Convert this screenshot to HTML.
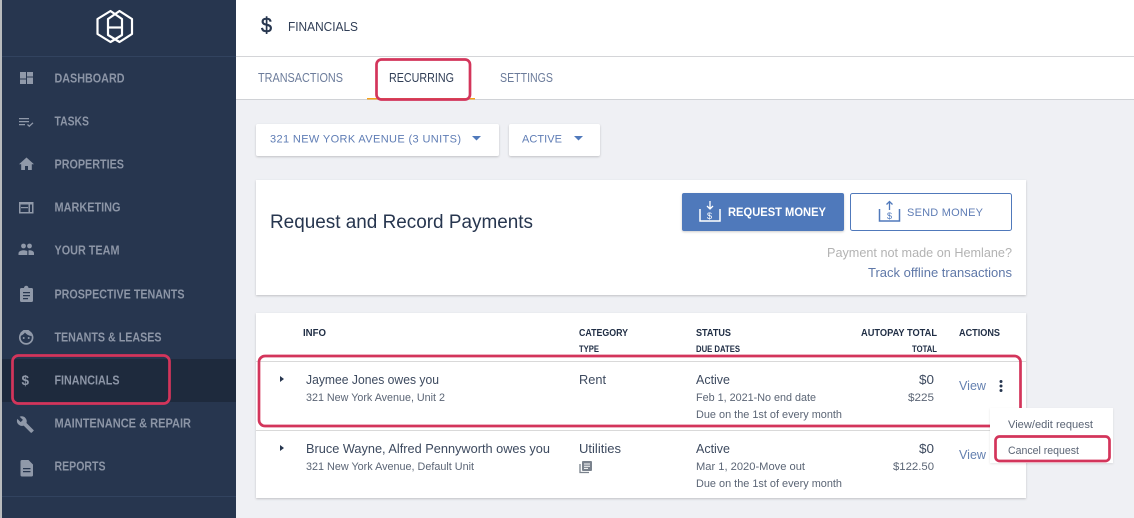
<!DOCTYPE html>
<html><head><meta charset="utf-8"><title>Financials</title>
<style>
html,body{margin:0;padding:0;background:#eff0f4}
svg{display:block}
text{font-family:"Liberation Sans",sans-serif}
.nav{font-size:12.5px;font-weight:bold;fill:#8c95a6}
.ni{fill:#9099a9}
.t{font-size:12.5px;fill:#3d4a5f}
.s{font-size:11px;fill:#5b6575}
.h{font-size:10.5px;font-weight:bold;fill:#1f2d44}
.h2{font-size:9.5px;font-weight:bold;fill:#1f2d44}
.b{fill:#5079bb}
</style></head><body>
<svg width="1134" height="518" viewBox="0 0 1134 518" xmlns="http://www.w3.org/2000/svg">
<defs>
<filter id="sh" x="-5%" y="-20%" width="110%" height="140%"><feDropShadow dx="0" dy="1" stdDeviation="1" flood-color="#000" flood-opacity=".2"/></filter>
<filter id="sh2" x="-10%" y="-20%" width="120%" height="140%"><feDropShadow dx="0" dy="1" stdDeviation="1" flood-color="#000" flood-opacity=".1"/></filter>
</defs>
<rect width="1134" height="518" fill="#eff0f4"/>
<!-- header -->
<rect x="236" y="0" width="898" height="56" fill="#fff"/>
<rect x="236" y="56" width="898" height="1" fill="#d4d5d8"/>
<rect x="236" y="57" width="898" height="42" fill="#fff"/>
<rect x="236" y="99" width="898" height="1" fill="#d0d2d6"/>
<text x="261" y="32.500" font-size="21" stroke="#27364f" stroke-width=".5" fill="#27364f" textLength="11" lengthAdjust="spacingAndGlyphs">$</text>
<text x="288" y="31" font-size="12.5" fill="#2f3d55" textLength="70" lengthAdjust="spacingAndGlyphs">FINANCIALS</text>
<text x="258" y="82" font-size="13" fill="#6c7c9b" textLength="85" lengthAdjust="spacingAndGlyphs">TRANSACTIONS</text>
<text x="389" y="82" font-size="13" fill="#2f3d55" textLength="65" lengthAdjust="spacingAndGlyphs">RECURRING</text>
<text x="500" y="82" font-size="13" fill="#6c7c9b" textLength="53" lengthAdjust="spacingAndGlyphs">SETTINGS</text>
<rect x="367" y="98" width="108" height="1.500" fill="#f5a11c"/>
<rect x="376.500" y="59.500" width="93.500" height="40" rx="5" fill="none" stroke="#d3355b" stroke-width="2.700"/>

<!-- sidebar -->
<rect x="0" y="0" width="2" height="518" fill="#b9bbbd"/>
<rect x="2" y="0" width="234" height="518" fill="#27364f"/>
<rect x="2" y="56" width="234" height="1" fill="#32435f"/>
<rect x="2" y="496" width="234" height="1" fill="#32435f"/>
<rect x="2" y="359" width="234" height="43" fill="#1e2a3d"/>
<g fill="none" stroke="#fff" stroke-width="2.200" stroke-linejoin="round">
<path d="M110.500 11 L97.500 19 V34 L110.500 42 L122 35 V19 Z"/>
<path d="M119.500 11 L132 19 V34 L119.500 42 L108 35 V19 Z"/>
<path d="M108 27.500 H122"/>
</g>
<rect x="20" y="72" width="6" height="6.500" class="ni"/><rect x="20" y="79.500" width="6" height="4.500" class="ni"/><rect x="27" y="72" width="6" height="4.500" class="ni"/><rect x="27" y="77.500" width="6" height="6.500" class="ni"/>
<path d="M19 118h10v1.200H19zM19 121h10v1.200H19zM19 124h6v1.200H19z" class="ni"/><path d="M27.500 124.500l1.800 1.700 3.700-3.400" fill="none" stroke="#9099a9" stroke-width="1.300"/>
<path d="M26.500 157.500l-7.500 6.700h2.200v5.800h3.800v-4h3v4h3.800v-5.800h2.200z" class="ni"/>
<path fill-rule="evenodd" d="M19 202h14.500v11.500H19zM20.500 204.500v7.500h8v-7.500zM30 204.500v7.500h2v-7.500z" class="ni"/><rect x="21" y="207" width="7" height="1.200" class="ni"/>
<circle cx="23.500" cy="246" r="2.400" class="ni"/><circle cx="29.500" cy="246" r="2.400" class="ni"/><path d="M18.500 255v-1.800c0-2 3-3 5-3s3.800.7 3.800.7v4.100zM28.500 255v-4.600c2-.5 5.500.5 5.500 2.800v1.800z" class="ni"/>
<path fill-rule="evenodd" d="M21.500 288h2.500a2.200 2.200 0 0 1 4.500 0h3a1.500 1.500 0 0 1 1.500 1.500v11a1.500 1.500 0 0 1-1.500 1.500h-10a1.500 1.500 0 0 1-1.500-1.500v-11a1.500 1.500 0 0 1 1.500-1.500zM23 292v1.300h7V292zM23 295v1.300h7V295zM23 298v1.300h5V298z" class="ni"/>
<circle cx="26.200" cy="337.500" r="6.400" fill="none" stroke="#9099a9" stroke-width="1.700"/><path d="M20 336c2-.5 4-2 5-3.500 1.500 2 4 3.500 7 3.500l-.5-3.500-3-2.500h-5l-3 2.500z" class="ni"/><circle cx="23.700" cy="338" r="1" class="ni"/><circle cx="28.700" cy="338" r="1" class="ni"/>
<text x="21.500" y="385" font-size="13.500" font-weight="bold" fill="#9099a9">$</text>
<path d="M33.500 430l-7-7c.6-1.800.2-3.800-1.300-5.300-1.500-1.500-3.700-1.800-5.500-1l3.200 3.200-2.200 2.200-3.300-3.200c-.9 1.800-.5 4 1 5.500 1.500 1.500 3.500 1.900 5.300 1.200l7 7c.3.300.8.300 1.100 0l1.700-1.700c.4-.3.4-.6 0-.9z" class="ni"/>
<path fill-rule="evenodd" d="M22 460h6.500l4.500 4.500V475a1.500 1.500 0 0 1-1.500 1.500H22a1.500 1.500 0 0 1-1.500-1.500v-13.500A1.500 1.500 0 0 1 22 460zM23 468v1.300h7.500V468zM23 471v1.300h7.500V471z" class="ni"/>
<text class="nav" x="54.500" y="82.700" textLength="70" lengthAdjust="spacingAndGlyphs">DASHBOARD</text>
<text class="nav" x="54.500" y="125.700" textLength="34.500" lengthAdjust="spacingAndGlyphs">TASKS</text>
<text class="nav" x="54.500" y="168.700" textLength="69.500" lengthAdjust="spacingAndGlyphs">PROPERTIES</text>
<text class="nav" x="54.500" y="211.700" textLength="66" lengthAdjust="spacingAndGlyphs">MARKETING</text>
<text class="nav" x="54.500" y="254.700" textLength="65" lengthAdjust="spacingAndGlyphs">YOUR TEAM</text>
<text class="nav" x="54.500" y="298.700" textLength="130" lengthAdjust="spacingAndGlyphs">PROSPECTIVE TENANTS</text>
<text class="nav" x="54.500" y="341.700" textLength="107" lengthAdjust="spacingAndGlyphs">TENANTS &amp; LEASES</text>
<text class="nav" x="54.500" y="384.700" textLength="65" lengthAdjust="spacingAndGlyphs">FINANCIALS</text>
<text class="nav" x="54.500" y="427.700" textLength="136.500" lengthAdjust="spacingAndGlyphs">MAINTENANCE &amp; REPAIR</text>
<text class="nav" x="54.500" y="470.700" textLength="51" lengthAdjust="spacingAndGlyphs">REPORTS</text>
<rect x="12.500" y="355.500" width="157" height="48" rx="6" fill="none" stroke="#d3355b" stroke-width="2.700"/>

<!-- dropdowns -->
<rect x="256" y="124" width="243" height="32" rx="2" fill="#fff" filter="url(#sh)"/>
<text x="270" y="142.500" font-size="11" fill="#5f7db5" textLength="191" lengthAdjust="spacing">321 NEW YORK AVENUE (3 UNITS)</text>
<path d="M472 136h9l-4.500 4.500z" class="b"/>
<rect x="509" y="124" width="91" height="32" rx="2" fill="#fff" filter="url(#sh)"/>
<text x="522" y="142.500" font-size="11" fill="#5f7db5" textLength="40" lengthAdjust="spacing">ACTIVE</text>
<path d="M574 136h9l-4.500 4.500z" class="b"/>

<!-- card 1 -->
<rect x="256" y="180" width="770" height="115" fill="#fff" filter="url(#sh)"/>
<text x="270" y="228" font-size="19" fill="#27364f" textLength="263" lengthAdjust="spacingAndGlyphs">Request and Record Payments</text>
<rect x="682" y="193" width="162" height="38" rx="2" fill="#5079bb" filter="url(#sh)"/>
<path d="M700 209v12h20v-12" fill="none" stroke="#fff" stroke-width="1.500"/>
<path d="M710 201v8M707 206l3 3 3-3" fill="none" stroke="#fff" stroke-width="1.300"/>
<text x="707" y="219" font-size="9" fill="#fff">$</text>
<text x="728" y="216" font-size="11.500" font-weight="bold" fill="#fff" textLength="98" lengthAdjust="spacingAndGlyphs">REQUEST MONEY</text>
<rect x="850.500" y="193.500" width="161" height="37" rx="2" fill="#fff" stroke="#5079bb"/>
<path d="M879.500 209v12h20v-12" fill="none" stroke="#5079bb" stroke-width="1.500"/>
<path d="M889.500 210v-8.500M886.500 204.500l3-3 3 3" fill="none" stroke="#5079bb" stroke-width="1.300"/>
<text x="887" y="219" font-size="9" fill="#5079bb">$</text>
<text x="907" y="216" font-size="11" fill="#5f7db5" textLength="76" lengthAdjust="spacing">SEND MONEY</text>
<text x="827" y="257" font-size="12.500" fill="#b3b3b3" textLength="185" lengthAdjust="spacingAndGlyphs">Payment not made on Hemlane?</text>
<text x="868" y="277" font-size="12.500" fill="#5f78a8" textLength="144" lengthAdjust="spacingAndGlyphs">Track offline transactions</text>

<!-- table -->
<rect x="256" y="313" width="770" height="185" fill="#fff" filter="url(#sh)"/>
<rect x="256" y="361" width="770" height="1" fill="#d9d9d9"/>
<rect x="256" y="430" width="770" height="1" fill="#d9d9d9"/>
<text class="h" x="303" y="336" textLength="23" lengthAdjust="spacingAndGlyphs">INFO</text>
<text class="h" x="579" y="336" textLength="49" lengthAdjust="spacingAndGlyphs">CATEGORY</text>
<text class="h2" x="579" y="352" textLength="20" lengthAdjust="spacingAndGlyphs">TYPE</text>
<text class="h" x="696" y="336" textLength="35" lengthAdjust="spacingAndGlyphs">STATUS</text>
<text class="h2" x="696" y="352" textLength="44" lengthAdjust="spacingAndGlyphs">DUE DATES</text>
<text class="h" x="861" y="336" textLength="76" lengthAdjust="spacingAndGlyphs">AUTOPAY TOTAL</text>
<text class="h2" x="912" y="352" textLength="25" lengthAdjust="spacingAndGlyphs">TOTAL</text>
<text class="h" x="959" y="336" textLength="41" lengthAdjust="spacingAndGlyphs">ACTIONS</text>

<path d="M280 376l4 3-4 3zM280 445l4 3-4 3z" fill="#27364f"/>
<text class="t" x="306" y="384" textLength="133" lengthAdjust="spacingAndGlyphs">Jaymee Jones owes you</text>
<text class="s" x="306" y="401" textLength="139" lengthAdjust="spacingAndGlyphs">321 New York Avenue, Unit 2</text>
<text class="t" x="579" y="384" textLength="27" lengthAdjust="spacingAndGlyphs">Rent</text>
<text class="t" x="696" y="384" textLength="34" lengthAdjust="spacingAndGlyphs">Active</text>
<text class="s" x="696" y="401" textLength="120" lengthAdjust="spacingAndGlyphs">Feb 1, 2021-No end date</text>
<text class="s" x="696" y="418" textLength="146" lengthAdjust="spacingAndGlyphs">Due on the 1st of every month</text>
<text class="t" x="919" y="384" textLength="15" lengthAdjust="spacingAndGlyphs">$0</text>
<text class="s" x="908" y="401" textLength="26" lengthAdjust="spacingAndGlyphs">$225</text>
<text x="959" y="390" font-size="13" fill="#6480b0" textLength="27" lengthAdjust="spacingAndGlyphs">View</text>
<circle cx="1001" cy="381.500" r="1.500" fill="#27364f"/><circle cx="1001" cy="386" r="1.500" fill="#27364f"/><circle cx="1001" cy="390.500" r="1.500" fill="#27364f"/>

<text class="t" x="306" y="453" textLength="244" lengthAdjust="spacingAndGlyphs">Bruce Wayne, Alfred Pennyworth owes you</text>
<text class="s" x="306" y="470" textLength="168" lengthAdjust="spacingAndGlyphs">321 New York Avenue, Default Unit</text>
<text class="t" x="579" y="453" textLength="42" lengthAdjust="spacingAndGlyphs">Utilities</text>
<path d="M580 464v8.500h9" fill="none" stroke="#7a828d" stroke-width="1.300"/>
<path fill-rule="evenodd" d="M583 461h8a1 1 0 0 1 1 1v8a1 1 0 0 1-1 1h-8a1 1 0 0 1-1-1v-8a1 1 0 0 1 1-1zM584 463.500v1h6v-1zM584 465.700v1h6v-1zM584 467.900v1h4v-1z" fill="#7a828d"/>
<text class="t" x="696" y="453" textLength="34" lengthAdjust="spacingAndGlyphs">Active</text>
<text class="s" x="696" y="470" textLength="109" lengthAdjust="spacingAndGlyphs">Mar 1, 2020-Move out</text>
<text class="s" x="696" y="487" textLength="146" lengthAdjust="spacingAndGlyphs">Due on the 1st of every month</text>
<text class="t" x="919" y="453" textLength="15" lengthAdjust="spacingAndGlyphs">$0</text>
<text class="s" x="893" y="470" textLength="41" lengthAdjust="spacingAndGlyphs">$122.50</text>
<text x="959" y="459" font-size="13" fill="#6480b0" textLength="27" lengthAdjust="spacingAndGlyphs">View</text>

<rect x="259" y="356" width="761.500" height="70" rx="6" fill="none" stroke="#d3355b" stroke-width="2.700"/>
<!-- menu -->
<rect x="990" y="408" width="123" height="55" fill="#fff" filter="url(#sh2)"/>
<text x="1008" y="428" font-size="11" fill="#5b6575" textLength="85" lengthAdjust="spacingAndGlyphs">View/edit request</text>
<text x="1008" y="454" font-size="11" fill="#5b6575" textLength="71" lengthAdjust="spacingAndGlyphs">Cancel request</text>
<rect x="995.500" y="436.500" width="114" height="24.500" rx="4" fill="none" stroke="#d3355b" stroke-width="2.700"/>
</svg>
</body></html>
